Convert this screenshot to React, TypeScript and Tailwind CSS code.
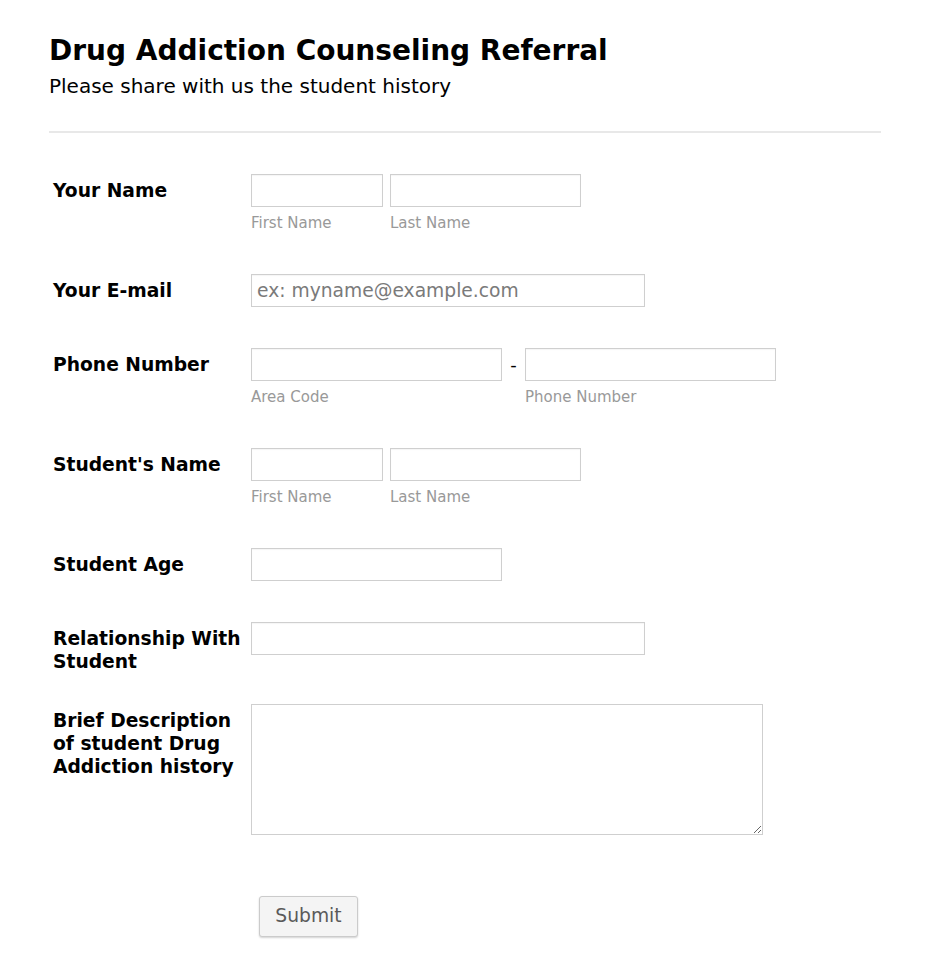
import { ReactNode } from "react";

const inputClass =
  "h-[33px] border border-[#cfcfcf] bg-white px-[5px] text-[18.7px] text-[#333] shadow-[inset_0_1px_1px_rgba(0,0,0,0.04)] outline-none placeholder:text-[#7a7a7a]";

function Row({ label, children, className }: { label: ReactNode; children: ReactNode; className: string }) {
  return (
    <div className={`flex items-start pl-[4px] ${className}`}>
      <label className="w-[198px] shrink-0 pt-[5px] pr-[6px] text-[18.7px] font-bold leading-[23px] text-black">
        {label}
      </label>
      <div>{children}</div>
    </div>
  );
}

function SubField({ width, sub }: { width: string; sub: string }) {
  return (
    <div className="flex flex-col">
      <input type="text" className={`${inputClass} ${width}`} />
      <span className="mt-[7px] text-[15px] leading-[19px] text-[#999]">{sub}</span>
    </div>
  );
}

export default function App() {
  return (
    <div className="min-h-screen bg-white px-[49px] pt-[34px] font-['DejaVu_Sans',sans-serif] text-black">
      <h1 className="text-[28px] font-bold leading-[34px]">Drug Addiction Counseling Referral</h1>
      <p className="mt-[6px] text-[20px] leading-[24px]">Please share with us the student history</p>

      <hr className="mt-[33px] w-[832px] border-0 border-t-2 border-[#e8e8e8]" />

      <form className="mt-[41px]" onSubmit={(e) => e.preventDefault()}>
        <Row label="Your Name" className="mb-[41px]">
          <div className="flex gap-[7px]">
            <SubField width="w-[132px]" sub="First Name" />
            <SubField width="w-[191px]" sub="Last Name" />
          </div>
        </Row>

        <Row label="Your E-mail" className="mb-[41px]">
          <input type="email" placeholder="ex: myname@example.com" className={`${inputClass} w-[394px]`} />
        </Row>

        <Row label="Phone Number" className="mb-[41px]">
          <div className="flex items-start">
            <SubField width="w-[251px]" sub="Area Code" />
            <span className="w-[23px] pt-[5px] text-center text-[18px] leading-[23px]">-</span>
            <SubField width="w-[251px]" sub="Phone Number" />
          </div>
        </Row>

        <Row label="Student's Name" className="mb-[41px]">
          <div className="flex gap-[7px]">
            <SubField width="w-[132px]" sub="First Name" />
            <SubField width="w-[191px]" sub="Last Name" />
          </div>
        </Row>

        <Row label="Student Age" className="mb-[41px]">
          <input type="text" className={`${inputClass} w-[251px]`} />
        </Row>

        <Row label="Relationship With Student" className="mb-[31px]">
          <input type="text" className={`${inputClass} w-[394px]`} />
        </Row>

        <Row label="Brief Description of student Drug Addiction history" className="mb-[61px]">
          <textarea className="block h-[131px] w-[512px] border border-[#cfcfcf] bg-white p-[5px] text-[16px] outline-none" />
        </Row>

        <div className="pl-[210px]">
          <button
            type="submit"
            className="h-[41px] w-[99px] rounded-[3px] border border-[#cbcbcb] bg-[#f4f4f4] text-[18.7px] text-[#5a5a5a] shadow-[0_1px_2px_rgba(0,0,0,0.18)]"
          >
            Submit
          </button>
        </div>
      </form>
    </div>
  );
}
